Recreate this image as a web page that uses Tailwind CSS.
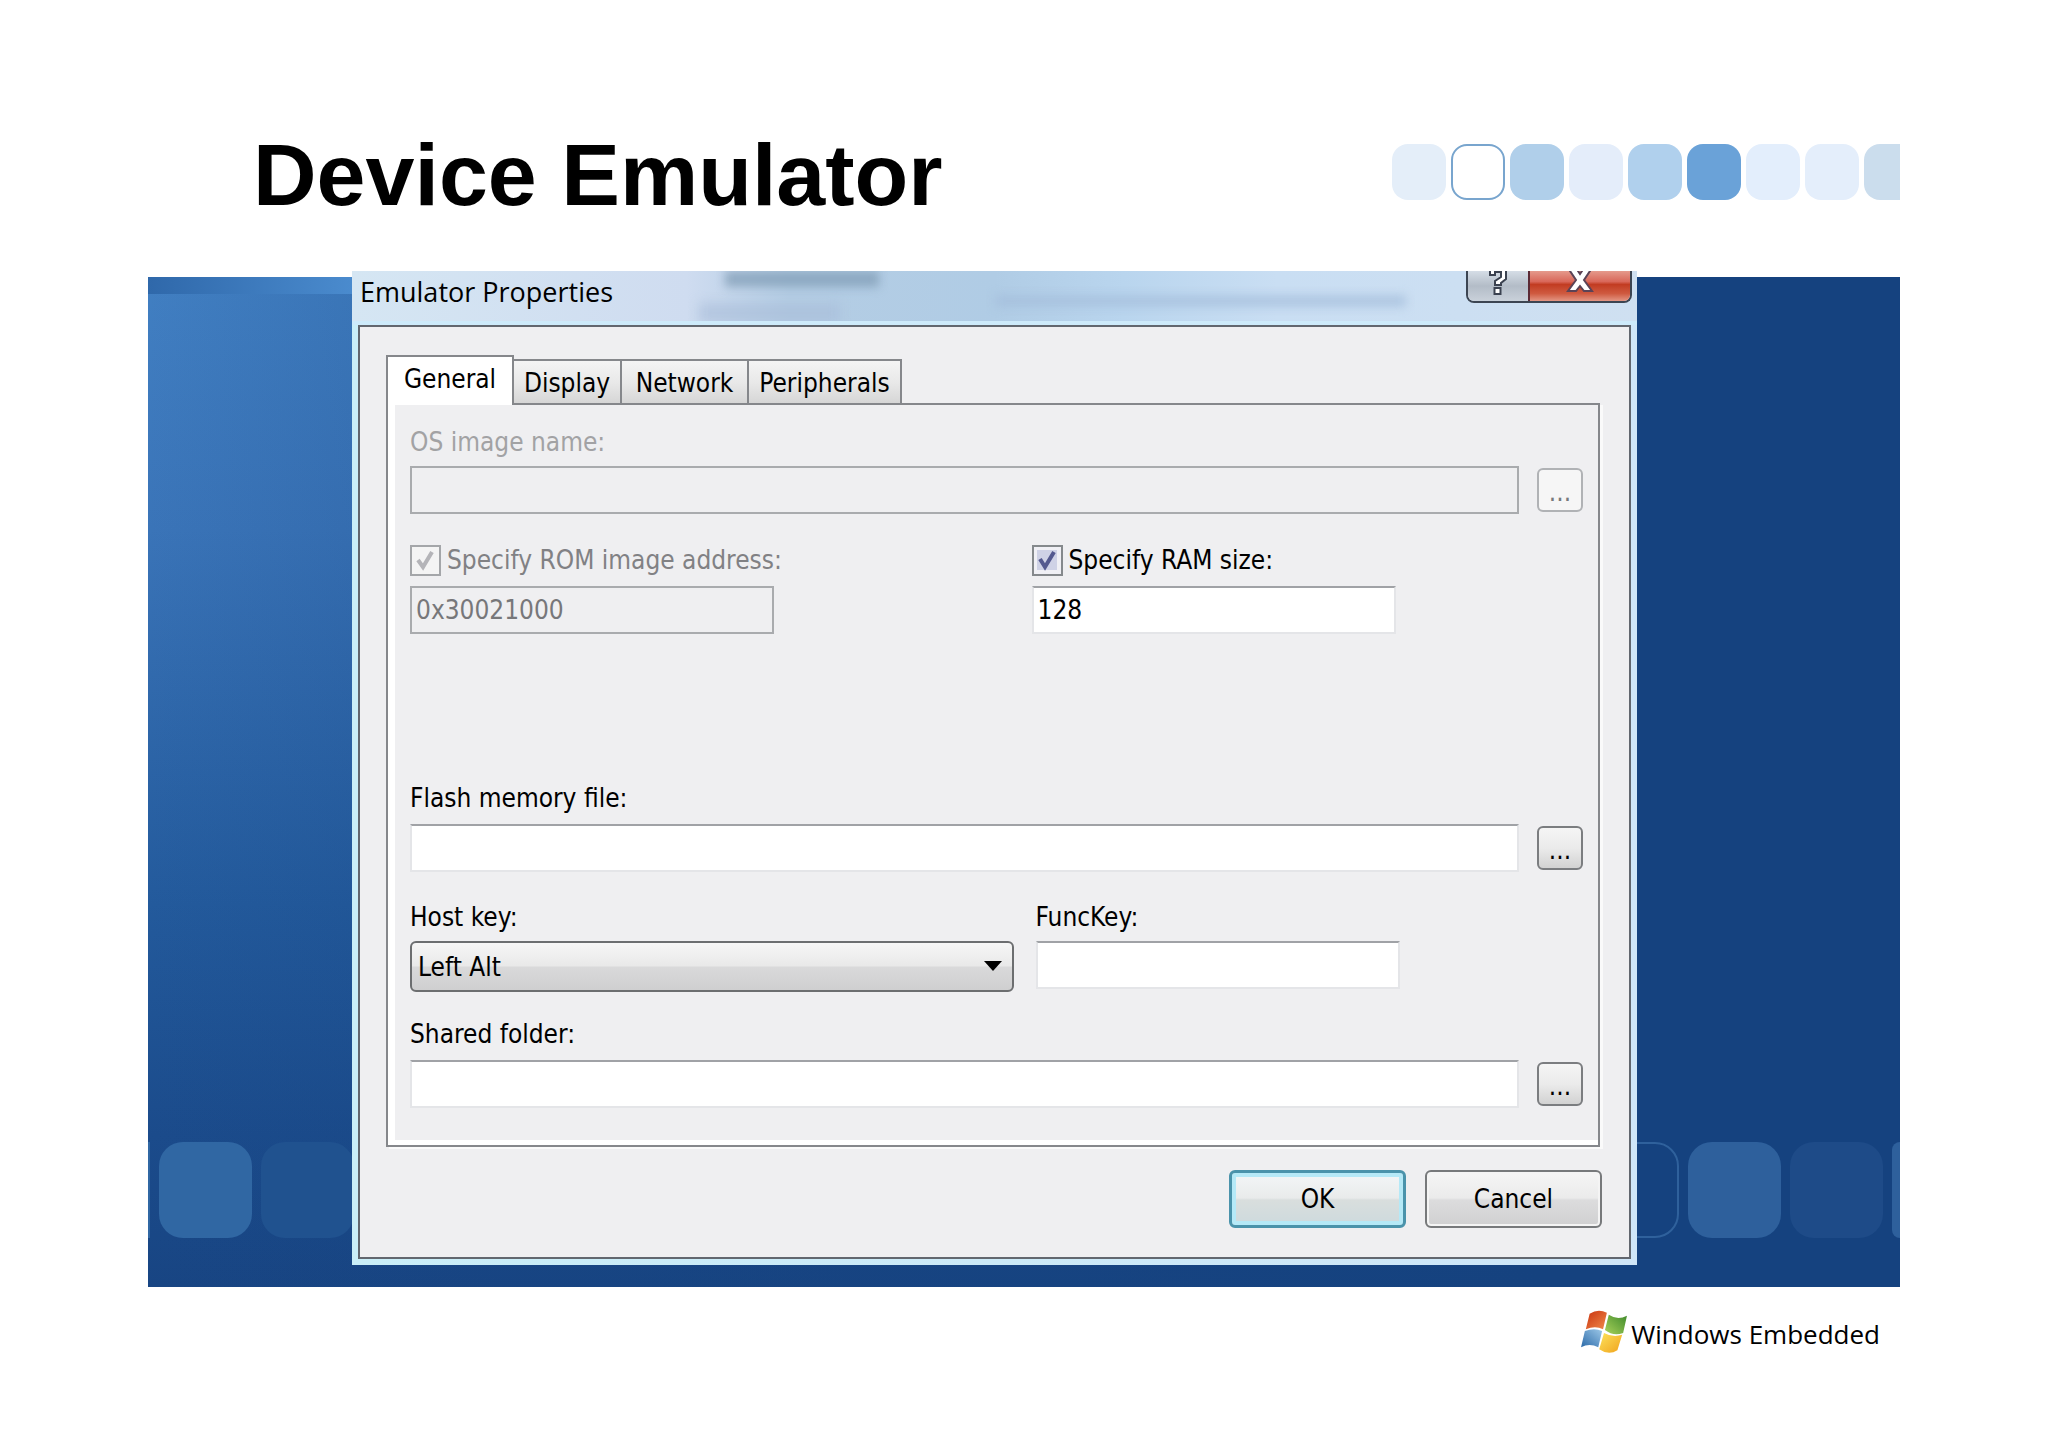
<!DOCTYPE html>
<html lang="en">
<head>
  <meta charset="UTF-8">
  <meta name="viewport" content="width=device-width, initial-scale=1">
  <title>Device Emulator</title>
  <script src="https://cdn.jsdelivr.net/npm/@tailwindcss/browser@4"></script>
</head>
<body class="bg-white text-black">
<main class="px-[148px] pt-[123px]">

  <!-- Slide title -->
  <header class="flex items-start justify-between pl-[105px]">
    <h1 class="font-['Liberation_Sans',Arial,sans-serif] font-bold text-[88px] leading-[104px]">Device Emulator</h1>
    <div class="flex gap-[5px] pt-[21px]" aria-hidden="true">
      <span class="h-14 w-[54px] rounded-2xl bg-[#e4eef9]"></span>
      <span class="h-14 w-[54px] rounded-2xl border-2 border-[#78a5ce]"></span>
      <span class="h-14 w-[54px] rounded-2xl bg-[#b0cfea]"></span>
      <span class="h-14 w-[54px] rounded-2xl bg-[#e4edfa]"></span>
      <span class="h-14 w-[54px] rounded-2xl bg-[#b0d0ed]"></span>
      <span class="h-14 w-[54px] rounded-2xl bg-[#6aa2d8]"></span>
      <span class="h-14 w-[54px] rounded-2xl bg-[#e3eefc]"></span>
      <span class="h-14 w-[54px] rounded-2xl bg-[#e4eefb]"></span>
      <span class="h-14 w-9 rounded-l-2xl bg-[#cbdded]"></span>
    </div>
  </header>

  <!-- Blue stage -->
  <section class="relative mt-[50px] pb-[22px] pl-[204px] pr-[263px] bg-[linear-gradient(to_right,transparent_0%,#15427f_80%),linear-gradient(to_bottom,#417fc2_0%,#3a74b8_25%,#235a9c_62%,#1b4b8b_85%,#184583_100%)]">
    <div class="absolute inset-x-0 top-0 h-[17px] bg-[linear-gradient(to_right,#2f68aa_0%,#4b8ccf_12%,#15427f_80%)]"></div>

    <!-- Squares along the bottom, partly hidden by the dialog -->
    <div class="absolute inset-x-0 bottom-[49px] flex justify-between overflow-hidden" aria-hidden="true">
      <div class="flex gap-[9px]">
        <span class="h-24 w-[2px] bg-[#3067a3]"></span>
        <span class="h-24 w-[93px] rounded-3xl bg-[#3067a3]"></span>
        <span class="h-24 w-[93px] rounded-3xl bg-[#20528f]"></span>
      </div>
      <div class="flex gap-[9px]">
        <span class="h-24 w-[93px] rounded-3xl border-2 border-[#2f619c]"></span>
        <span class="h-24 w-[93px] rounded-3xl bg-[#2e609c]"></span>
        <span class="h-24 w-[93px] rounded-3xl bg-[#1e4b88]"></span>
        <span class="h-24 w-2 rounded-l-lg bg-[#2e609c]"></span>
      </div>
    </div>

    <!-- Dialog -->
    <form class="relative -top-[6px] -mb-[6px] bg-[linear-gradient(to_right,#c9eef8,#cfe6f8)] px-[6px] pb-[6px] font-['DejaVu_Sans_Condensed','DejaVu_Sans',sans-serif] text-[26px] leading-8" onsubmit="return false">
      <div class="relative -mx-[6px] flex h-[54px] items-start justify-between overflow-hidden bg-[linear-gradient(to_right,#d5e6f3_0%,#cfdcf0_26%,#b4cde4_34%,#b0cce5_50%,#b9d5ee_60%,#c9def3_72%,#cfe0f1_100%)] pl-2 pr-[5px]">
        <div class="absolute left-[27%] top-8 h-5 w-[11%] bg-[#a9bcd8]/60 blur-[6px]" aria-hidden="true"></div>
        <div class="absolute left-[29%] top-0 h-4 w-[12%] bg-[#7d9ab3]/70 blur-[5px]" aria-hidden="true"></div>
        <div class="absolute left-[50%] top-6 h-3 w-[32%] bg-[#a4bedb]/70 blur-[5px]" aria-hidden="true"></div>
        <div class="absolute inset-x-0 bottom-0 h-1 bg-[#cdeafa]" aria-hidden="true"></div>
        <h2 class="relative font-['Open_Sans',sans-serif] text-[27px] leading-[42px]">Emulator Properties</h2>
        <div class="relative flex h-8 overflow-hidden rounded-b-lg border-2 border-t-0 border-[#3c4552]">
          <button type="button" aria-label="Help" class="flex w-[60px] justify-center bg-[linear-gradient(to_bottom,#d5dde6,#b3bcc7_50%,#c9d1da)]">
            <svg class="h-6 w-8" viewBox="0 0 32 24" fill="#fff" stroke="#3b4250" stroke-width="2"><path d="M8 -2V4h5V1h6v5l-6 4v4h6v-2l5-4V-2zM12.500 17h6v6h-6z"/></svg>
          </button>
          <button type="button" aria-label="Close" class="flex w-[102px] justify-center border-l-2 border-[#5b2a35] bg-[linear-gradient(to_bottom,#e59a8c_0%,#d9685a_35%,#c23c22_45%,#cf5a40_75%,#e39684_100%)]">
            <svg class="h-6 w-8" viewBox="0 0 32 24" fill="#fff" stroke="#5b4356" stroke-width="2"><path d="M4-3l8 12L4 20h8l4-5 4 5h8L20 9l8-12h-8l-4 6-4-6z"/></svg>
          </button>
        </div>
      </div>

      <div class="border-2 border-[#62676f] bg-[#efeff1] pb-[29px] pt-7">
        <div class="pl-[26px] pr-[29px]">
          <!-- Tabs -->
          <div class="flex items-end" role="tablist">
            <button type="button" role="tab" aria-selected="true" class="relative -mb-[2px] flex h-[50px] w-[128px] justify-center border-2 border-b-0 border-[#85878b] bg-white pt-1.5">General</button>
            <button type="button" role="tab" class="flex h-11 w-[108px] justify-center border-r-2 border-t-2 border-[#85878b] bg-[linear-gradient(to_bottom,#f4f4f4,#e9e9e9_50%,#d6d6d6)] pt-1.5">Display</button>
            <button type="button" role="tab" class="flex h-11 w-[127px] justify-center border-r-2 border-t-2 border-[#85878b] bg-[linear-gradient(to_bottom,#f4f4f4,#e9e9e9_50%,#d6d6d6)] pt-1.5">Network</button>
            <button type="button" role="tab" class="flex h-11 w-[153px] justify-center border-r-2 border-t-2 border-[#85878b] bg-[linear-gradient(to_bottom,#f4f4f4,#e9e9e9_50%,#d6d6d6)] pt-1.5">Peripherals</button>
          </div>

          <!-- General page -->
          <div role="tabpanel" class="border-2 border-[#85878b] pb-[37px] pl-[22px] pr-[15px] pt-[21px] shadow-[inset_7px_-5px_0_#fff,3px_2px_0_#fafafa]">
            <label for="os-image" class="block text-[#a2a2a4]">OS image name:</label>
            <div class="mt-2 flex items-center gap-[18px]">
              <input id="os-image" type="text" disabled class="h-12 min-w-0 flex-1 border-2 border-[#a9abae] bg-[#efeff1] px-1">
              <button type="button" disabled aria-label="Browse OS image" class="flex h-11 w-[46px] items-end justify-center rounded-md border-2 border-[#b0b2b5] bg-[#f6f6f6] pb-0.5 text-[#77797d]">...</button>
            </div>

            <div class="mt-[30px] grid grid-cols-[621fr_551fr]">
              <div>
                <div class="flex items-center gap-[6px]">
                  <span class="relative flex">
                    <input id="rom" type="checkbox" checked disabled class="size-[31px] appearance-none border-2 border-[#a4a6a9] bg-[#f4f4f4]">
                    <svg class="pointer-events-none absolute inset-1 size-[23px]" viewBox="0 0 23 23" fill="none" stroke="#b4b4b8" stroke-width="4"><path d="M4 11l5 7L18 3"/></svg>
                  </span>
                  <label for="rom" class="text-[#818184]">Specify ROM image address:</label>
                </div>
                <input type="text" disabled value="0x30021000" aria-label="ROM image address" class="mt-2.5 h-12 w-[364px] border-2 border-[#a9abae] bg-[#efeff1] px-1 text-[#77777a]">
              </div>
              <div>
                <div class="flex items-center gap-[6px]">
                  <span class="relative flex">
                    <input id="ram" type="checkbox" checked class="size-[31px] appearance-none border-2 border-[#85898c] bg-[#f0f0f5]">
                    <svg class="pointer-events-none absolute inset-1 size-[23px]" viewBox="0 0 23 23" fill="none"><path d="M1 1h20v20H1z" fill="#cfd2e6"/><path d="M4 10l5 8L18 3" stroke="#54598f" stroke-width="4"/></svg>
                  </span>
                  <label for="ram">Specify RAM size:</label>
                </div>
                <input type="text" value="128" aria-label="RAM size" class="mt-2.5 h-12 w-[364px] border-2 border-[#e4e5e8] border-t-[#a0a2a6] bg-white px-1">
              </div>
            </div>

            <label for="flash" class="mt-[148px] block">Flash memory file:</label>
            <div class="mt-2.5 flex items-center gap-[18px]">
              <input id="flash" type="text" class="h-12 min-w-0 flex-1 border-2 border-[#e4e5e8] border-t-[#a0a2a6] bg-white px-1">
              <button type="button" aria-label="Browse flash memory file" class="flex h-11 w-[46px] items-end justify-center rounded-md border-2 border-[#7b7d80] bg-[linear-gradient(to_bottom,#f5f5f5,#ebebeb_50%,#d2d2d2)] pb-0.5">...</button>
            </div>

            <div class="mt-[29px] grid grid-cols-[621fr_551fr]">
              <div class="pr-[18px]">
                <label for="host-key" class="block">Host key:</label>
                <div class="relative mt-2">
                  <select id="host-key" class="block h-[51px] w-full appearance-none rounded-md border-2 border-[#6c6e70] bg-[linear-gradient(to_bottom,#f6f6f6,#e9e9e9_48%,#d9d9da_52%,#cfcfd0)] px-1.5">
                    <option>Left Alt</option>
                  </select>
                  <svg class="pointer-events-none absolute right-3 top-5 h-[10px] w-[18px]" viewBox="0 0 18 10"><path d="M0 0h18L9 10z"/></svg>
                </div>
              </div>
              <div class="pl-1">
                <label for="func-key" class="block">FuncKey:</label>
                <input id="func-key" type="text" class="mt-2 block h-12 w-[364px] border-2 border-[#e4e5e8] border-t-[#a0a2a6] bg-white px-1">
              </div>
            </div>

            <label for="shared" class="mt-[26px] block">Shared folder:</label>
            <div class="mt-2.5 flex items-center gap-[18px]">
              <input id="shared" type="text" class="h-12 min-w-0 flex-1 border-2 border-[#e4e5e8] border-t-[#a0a2a6] bg-white px-1">
              <button type="button" aria-label="Browse shared folder" class="flex h-11 w-[46px] items-end justify-center rounded-md border-2 border-[#7b7d80] bg-[linear-gradient(to_bottom,#f5f5f5,#ebebeb_50%,#d2d2d2)] pb-0.5">...</button>
            </div>
          </div>
        </div>

        <div class="mt-[23px] flex justify-end gap-[19px] pr-[27px]">
          <button type="submit" class="h-[58px] w-[177px] rounded-md border-[3px] border-[#4a93ab] bg-[linear-gradient(to_bottom,#f3f6f7,#e9ebeb_48%,#d9dedd_52%,#cddadd)] shadow-[inset_0_0_0_4px_#b5e9f7]">OK</button>
          <button type="button" class="h-[58px] w-[177px] rounded-md border-2 border-[#77797b] bg-[linear-gradient(to_bottom,#f5f5f5,#ebebeb_48%,#dcdcdd_52%,#d0d0d1)] shadow-[inset_0_0_0_2px_#f4f4f4]">Cancel</button>
        </div>
      </div>
    </form>
  </section>

  <!-- Brand -->
  <footer class="flex items-center justify-end gap-1 pr-5 pt-[22px]">
    <svg class="h-[44px] w-[46px]" viewBox="0 0 48 46" aria-hidden="true">
      <defs>
        <linearGradient id="r" x1="0" y1="0" x2="1" y2="1"><stop offset="0" stop-color="#c9330f"/><stop offset="1" stop-color="#f08a4a"/></linearGradient>
        <linearGradient id="g" x1="1" y1="0" x2="0" y2="1"><stop offset="0" stop-color="#3f8a2c"/><stop offset="1" stop-color="#a9d25a"/></linearGradient>
        <linearGradient id="b" x1="1" y1="0" x2="0" y2="1"><stop offset="0" stop-color="#9cc8e8"/><stop offset="1" stop-color="#2c6aa8"/></linearGradient>
        <linearGradient id="y" x1="0" y1="0" x2="1" y2="1"><stop offset="0" stop-color="#fde35c"/><stop offset="1" stop-color="#f0a21c"/></linearGradient>
      </defs>
      <path fill="url(#r)" d="M9 4Q18-2 27 3L23 20Q15 16 5 20z"/>
      <path fill="url(#g)" d="M29 5Q38 11 48 6L44 24Q34 28 25 21z"/>
      <path fill="url(#b)" d="M4 22Q14 18 22 22L18 39Q9 34 0 39z"/>
      <path fill="url(#y)" d="M24 24Q33 29 43 26L38 42Q29 48 19 41z"/>
    </svg>
    <span class="pt-1 font-['Open_Sans',sans-serif] text-[26px] font-medium leading-[42px]">Windows Embedded</span>
  </footer>
</main>
</body>
</html>
